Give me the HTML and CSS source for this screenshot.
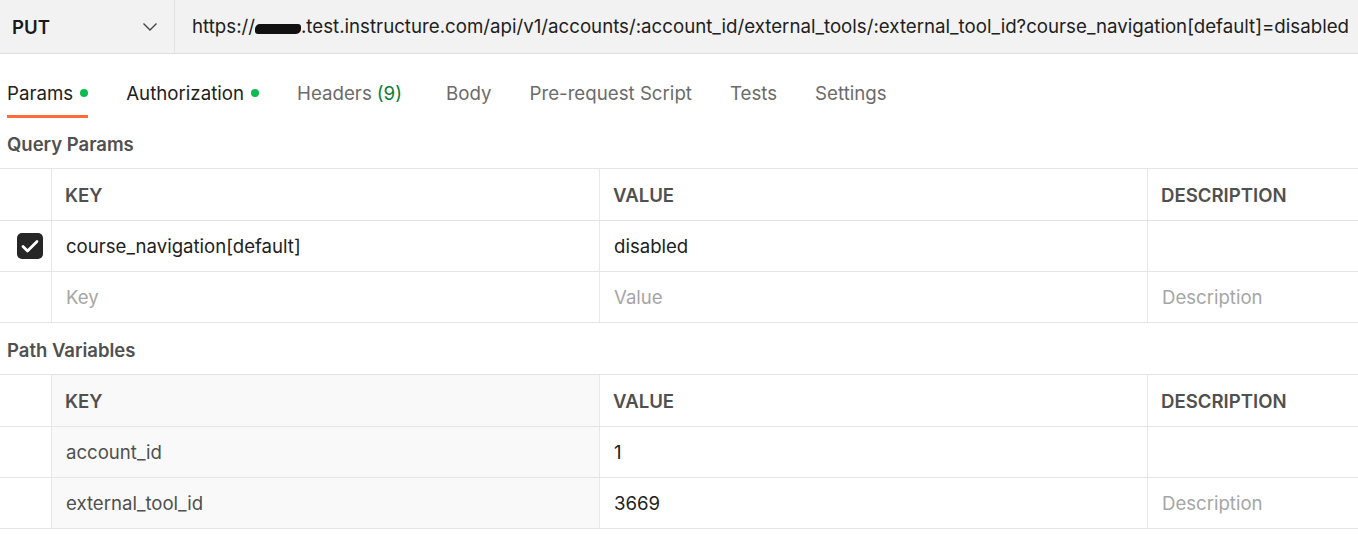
FILE: index.html
```html
<!DOCTYPE html>
<html>
<head>
<meta charset="utf-8">
<link rel="stylesheet" href="styles.css">
</head>
<body>
<div class="topbar">
  <div class="method">
    <span>PUT</span>
    <svg class="chev" width="16" height="10" viewBox="0 0 16 10"><path d="M1.5 1.5 L8 8 L14.5 1.5" fill="none" stroke="#444" stroke-width="1.4"/></svg>
  </div>
  <div class="url">https://<span class="redact">xxxxx</span>.test.instructure.com/api/v1/accounts/:account_id/external_tools/:external_tool_id?course_navigation[default]=disabled</div>
</div>
<div class="tabs">
  <div class="tab active">Params<span class="dot"></span></div>
  <div class="tab dark">Authorization<span class="dot"></span></div>
  <div class="tab headers">Headers <span class="count">(9)</span></div>
  <div class="tab">Body</div>
  <div class="tab">Pre-request Script</div>
  <div class="tab">Tests</div>
  <div class="tab">Settings</div>
</div>
<div class="section-title">Query Params</div>
<div class="table">
  <div class="row head">
    <div class="c0"></div>
    <div class="c1">KEY</div>
    <div class="c2">VALUE</div>
    <div class="c3">DESCRIPTION</div>
  </div>
  <div class="row">
    <div class="c0"><span class="check"><svg width="18" height="14" viewBox="0 0 18 14"><path d="M2 7.5 L6.5 12 L16 2.5" fill="none" stroke="#fff" stroke-width="2.8" stroke-linecap="round" stroke-linejoin="round"/></svg></span></div>
    <div class="c1">course_navigation[default]</div>
    <div class="c2">disabled</div>
    <div class="c3"></div>
  </div>
  <div class="row">
    <div class="c0"></div>
    <div class="c1 ph">Key</div>
    <div class="c2 ph">Value</div>
    <div class="c3 ph">Description</div>
  </div>
</div>
<div class="section-title">Path Variables</div>
<div class="table path">
  <div class="row head">
    <div class="c0"></div>
    <div class="c1">KEY</div>
    <div class="c2">VALUE</div>
    <div class="c3">DESCRIPTION</div>
  </div>
  <div class="row">
    <div class="c0"></div>
    <div class="c1">account_id</div>
    <div class="c2">1</div>
    <div class="c3"></div>
  </div>
  <div class="row">
    <div class="c0"></div>
    <div class="c1">external_tool_id</div>
    <div class="c2">3669</div>
    <div class="c3 ph">Description</div>
  </div>
</div>
</body>
</html>
```

FILE: styles.css
```css
* { box-sizing: border-box; }
html, body { margin: 0; padding: 0; background: #fff; }
body {
  font-family: Inter, "Noto Sans", sans-serif;
  color: #212121;
  width: 1358px;
  overflow: hidden;
}
.topbar {
  display: flex;
  height: 54px;
  background: #f2f2f2;
  border-bottom: 1px solid #dedede;
}
.method {
  width: 175px;
  display: flex;
  align-items: center;
  justify-content: space-between;
  padding: 0 16px 0 12px;
  border-right: 1px solid #e2e2e2;
  font-size: 18.6px;
  font-weight: 600;
  color: #1a1a1a;
}
.chev { margin-top: 1px; }
.url {
  flex: 1;
  display: flex;
  align-items: center;
  padding-left: 17px;
  font-size: 18.7px;
  color: #212121;
  white-space: nowrap;
  overflow: hidden;
}
.redact {
  display: inline-block;
  background: #111;
  color: transparent;
  height: 10px;
  width: 46px;
  border-radius: 5px 3px 5px 3px;
  margin-top: 4px;
  font-size: 8px;
  line-height: 10px;
  overflow: hidden;
}
.tabs {
  display: flex;
  gap: 38px;
  padding-left: 7px;
  height: 64px;
  align-items: stretch;
}
.tab {
  display: flex;
  align-items: center;
  padding-top: 18px;
  font-size: 18.7px;
  color: #6b6b6b;
  border-bottom: 3px solid transparent;
  white-space: nowrap;
}
.tab.active { color: #212121; border-bottom-color: #ff6c37; }
.tab.dark { color: #212121; }
.tab.headers { margin-right: 6px; }
.count { color: #0a7c3a; margin-left: 5px; }
.dot {
  width: 8px;
  height: 8px;
  border-radius: 50%;
  background: #0cbb52;
  margin-left: 7px;
  margin-top: -2px;
}
.section-title {
  height: 50px;
  display: flex;
  align-items: center;
  padding-left: 7px;
  padding-top: 1px;
  font-size: 18.5px;
  font-weight: 600;
  color: #505050;
}
.table { border-top: 1px solid #e4e4e4; margin-bottom: 1px; }
.row {
  display: grid;
  grid-template-columns: 52px 548px 548px 1fr;
  height: 51px;
  border-bottom: 1px solid #e4e4e4;
}
.row.head { height: 52px; }
.row > div {
  display: flex;
  align-items: center;
  font-size: 18.6px;
  border-right: 1px solid #e8e8e8;
  padding-left: 14px;
  white-space: nowrap;
  overflow: hidden;
}
.row > .c3 { border-right: none; }
.row > .c0 { padding-left: 0; justify-content: center; }
.row.head > div {
  font-weight: 600;
  color: #505050;
  padding-left: 13px;
}
.row > .ph { color: #a6a6a6; }
.path .c1 { background: #f9f9f9; color: #505050; }
.check {
  width: 26px;
  height: 26px;
  border-radius: 5px;
  background: #262626;
  display: flex;
  align-items: center;
  justify-content: center;
  margin-left: 8px;
}
```
